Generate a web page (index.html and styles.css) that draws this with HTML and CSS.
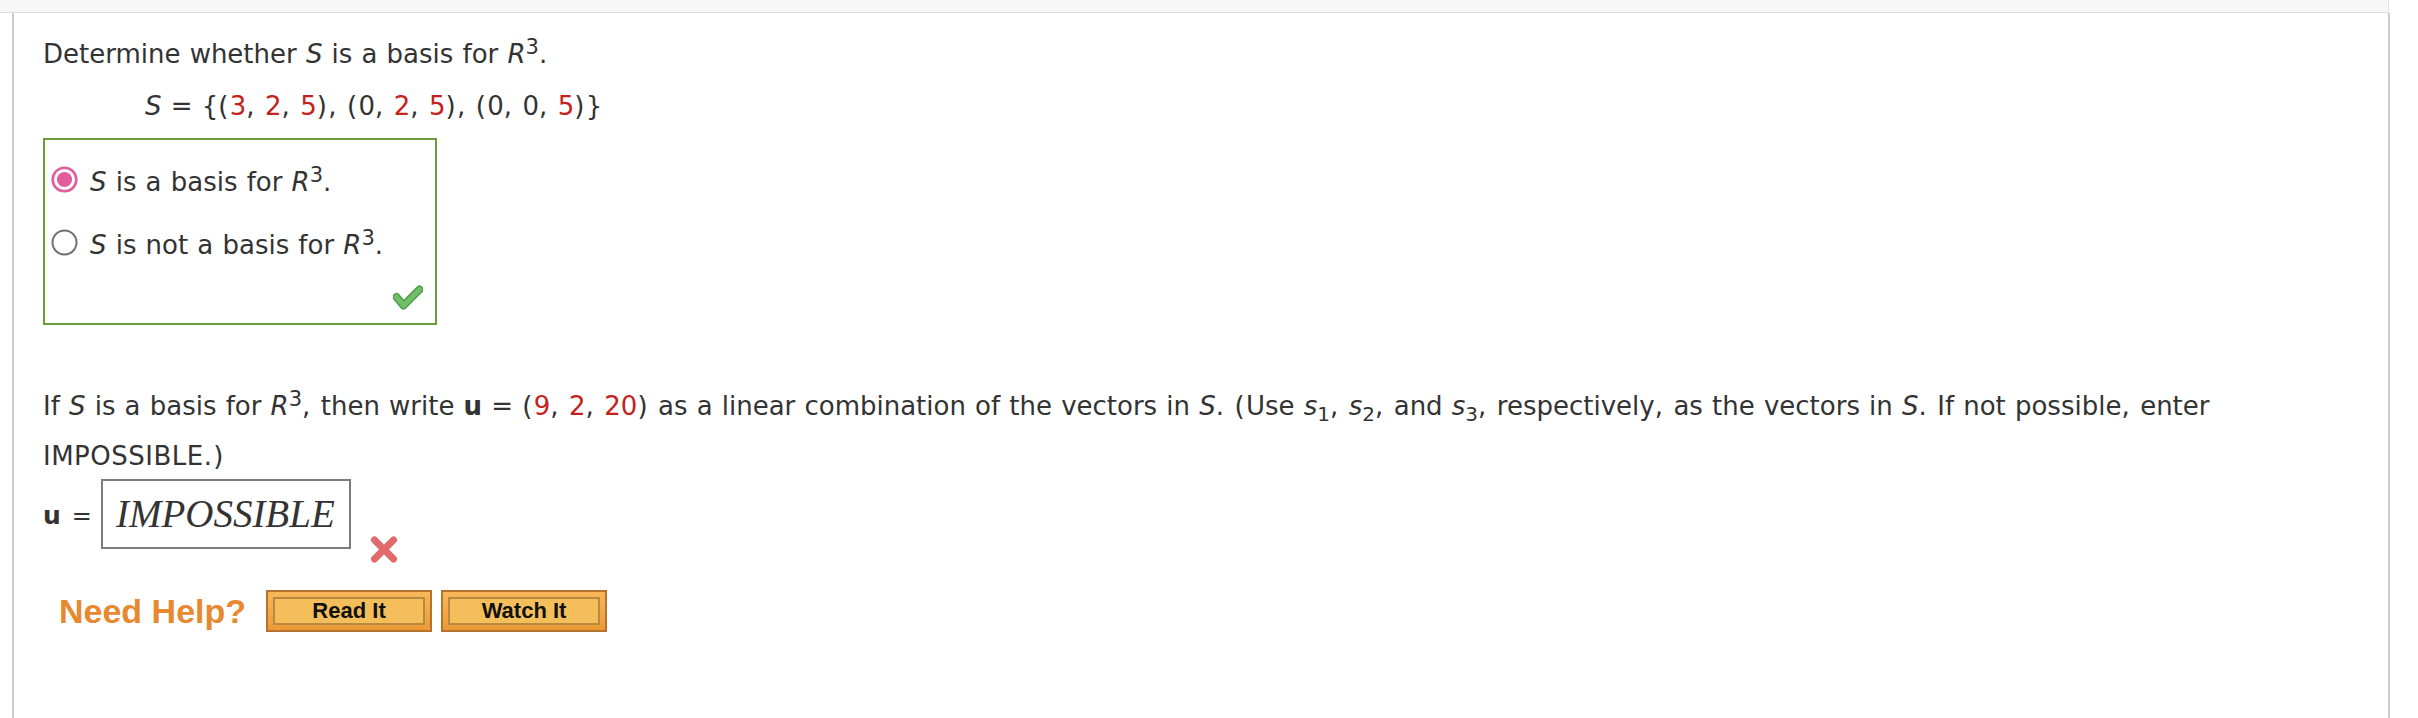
FILE: index.html
```html
<!DOCTYPE html>
<html>
<head>
<meta charset="utf-8">
<link rel="stylesheet" href="styles.css">
</head>
<body>
<div class="topbar"></div>
<div class="frame">
  <p class="line">Determine whether <i>S</i> is a basis for <i>R</i><span class="sup">3</span><span class="w">.</span></p>
  <p class="line set"><i>S</i> = {<span class="w">(</span><span class="red">3</span><span class="w">,</span> <span class="red">2</span><span class="w">,</span> <span class="red">5</span><span class="w">),</span> <span class="w">(</span>0<span class="w">,</span> <span class="red">2</span><span class="w">,</span> <span class="red">5</span><span class="w">),</span> <span class="w">(</span>0<span class="w">,</span> 0<span class="w">,</span> <span class="red">5</span><span class="w">)</span>}</p>
  <div class="choices">
    <div class="opt">
      <svg class="radio" width="27" height="27" viewBox="0 0 27 27"><circle cx="13.5" cy="13.5" r="11.8" fill="#fff" stroke="#e25c9d" stroke-width="2.6"/><circle cx="13.5" cy="13.5" r="7.6" fill="#e25c9d"/></svg>
      <span><i>S</i> is a basis for <i>R</i><span class="sup">3</span><span class="w">.</span></span>
    </div>
    <div class="opt">
      <svg class="radio" width="27" height="27" viewBox="0 0 27 27"><circle cx="13.5" cy="13.5" r="12" fill="#fff" stroke="#707070" stroke-width="2"/></svg>
      <span><i>S</i> is not a basis for <i>R</i><span class="sup">3</span><span class="w">.</span></span>
    </div>
    <div class="mark">
      <svg width="30" height="25" viewBox="0 0 30 25"><path d="M3.5 12 L10.5 20.5 L26.5 4.5" fill="none" stroke="#519b4a" stroke-width="8" stroke-linecap="round" stroke-linejoin="round"/><path d="M3.5 12 L10.5 20.5 L26.5 4.5" fill="none" stroke="#70c068" stroke-width="5" stroke-linecap="round" stroke-linejoin="round"/></svg>
    </div>
  </div>
  <p class="para">If <i>S</i> is a basis for <i>R</i><span class="sup">3</span><span class="w">,</span> then write <b>u</b> = <span class="w">(</span><span class="red">9</span><span class="w">,</span> <span class="red">2</span><span class="w">,</span> <span class="red">20</span><span class="w">)</span> as a linear combination of the vectors in <i>S</i><span class="w">.</span> <span class="w">(</span>Use <i>s</i><span class="sub">1</span><span class="w">,</span> <i>s</i><span class="sub">2</span><span class="w">,</span> and <i>s</i><span class="sub">3</span><span class="w">,</span> respectively<span class="w">,</span> as the vectors in <i>S</i><span class="w">.</span> If not possible<span class="w">,</span> enter<br><span class="caps">IMPOSSIBLE</span><span class="w">.)</span></p>
  <div class="answer">
    <span class="ulabel"><b>u</b><span class="eq">=</span></span>
    <div class="input">IMPOSSIBLE</div>
    <svg class="xmark" width="30" height="29" viewBox="0 0 30 29"><path d="M5.5 5 L24.5 24 M24.5 5 L5.5 24" stroke="#e26a6c" stroke-width="7" stroke-linecap="round"/></svg>
  </div>
  <div class="help">
    <span class="need">Need Help?</span>
    <span class="btn"><span class="btn-inner">Read It</span></span>
    <span class="btn"><span class="btn-inner">Watch It</span></span>
  </div>
</div>
</body>
</html>
```

FILE: styles.css
```css
html, body {
  margin: 0;
  padding: 0;
  background: #fff;
}
body {
  width: 2418px;
  height: 718px;
  overflow: hidden;
  font-family: "DejaVu Sans", Verdana, sans-serif;
  font-size: 26px;
  color: #333;
  word-spacing: 0.9px;
}
.topbar {
  width: 2388px;
  height: 12px;
  background: #f6f6f6;
  border-bottom: 1px solid #dcdcdc;
  border-right: 1px solid #e2e2e2;
}
.frame {
  margin-left: 12px;
  width: 2316px;
  height: 705px;
  border-left: 2px solid #cccccc;
  border-right: 2px solid #cccccc;
  padding: 15px 29px 0 29px;
  box-sizing: content-box;
}
.line {
  margin: 0;
  line-height: 52px;
  white-space: nowrap;
}
.set {
  padding-left: 102px;
}
.w {
  letter-spacing: 1.3px;
}
.caps {
  letter-spacing: 0.5px;
}
.red {
  color: #c6221c;
}
.sup {
  font-size: 21px;
  line-height: 0;
  vertical-align: 9px;
}
.sub {
  font-size: 20px;
  line-height: 0;
  vertical-align: -6px;
}
.choices {
  margin-top: 6px;
  width: 390px;
  border: 2px solid #6b9e3b;
  padding-top: 10px;
}
.opt {
  display: flex;
  align-items: center;
  height: 63px;
  padding-left: 6px;
  white-space: nowrap;
}
.radio {
  flex: none;
  margin-right: 12px;
  margin-bottom: 4px;
}
.mark {
  display: flex;
  justify-content: flex-end;
  height: 38px;
  padding: 9px 12px 0 0;
}
.para {
  margin: 56px 0 0 0;
  line-height: 50px;
}
.answer {
  display: flex;
  align-items: flex-start;
  margin-top: -2px;
}
.ulabel {
  display: flex;
  align-items: baseline;
  height: 70px;
  line-height: 70px;
  font-size: 24px;
  padding-top: 2px;
  box-sizing: border-box;
}
.ulabel b {
  font-weight: bold;
  font-size: 25px;
}
.eq {
  margin-left: 11px;
  margin-right: 9px;
}
.input {
  height: 66px;
  border: 2px solid #7c7c7c;
  font-family: "Liberation Serif", "Times New Roman", serif;
  font-style: italic;
  font-size: 39px;
  line-height: 66px;
  padding-left: 13px;
  box-sizing: content-box;
  width: 233px;
  color: #333;
  white-space: nowrap;
  word-spacing: 0;
}
.xmark {
  flex: none;
  margin-left: 18px;
  margin-top: 56px;
}
.help {
  display: flex;
  align-items: center;
  margin-top: 26px;
  height: 42px;
  word-spacing: 0;
}
.need {
  font-family: "Liberation Sans", Arial, sans-serif;
  font-weight: bold;
  font-size: 34px;
  color: #e8892f;
  margin-left: 16px;
  margin-right: 20px;
}
.btn {
  display: flex;
  box-sizing: border-box;
  width: 166px;
  height: 42px;
  margin-right: 9px;
  border: 2px solid #b5732f;
  background: linear-gradient(#f7b85a, #ec9a34);
  padding: 5px 5px;
}
.btn-inner {
  flex: 1;
  display: flex;
  align-items: center;
  justify-content: center;
  border: 2px solid #b88940;
  background: #f4bf5b;
  font-family: "Liberation Sans", Arial, sans-serif;
  font-weight: bold;
  font-size: 22px;
  color: #111;
}
```
